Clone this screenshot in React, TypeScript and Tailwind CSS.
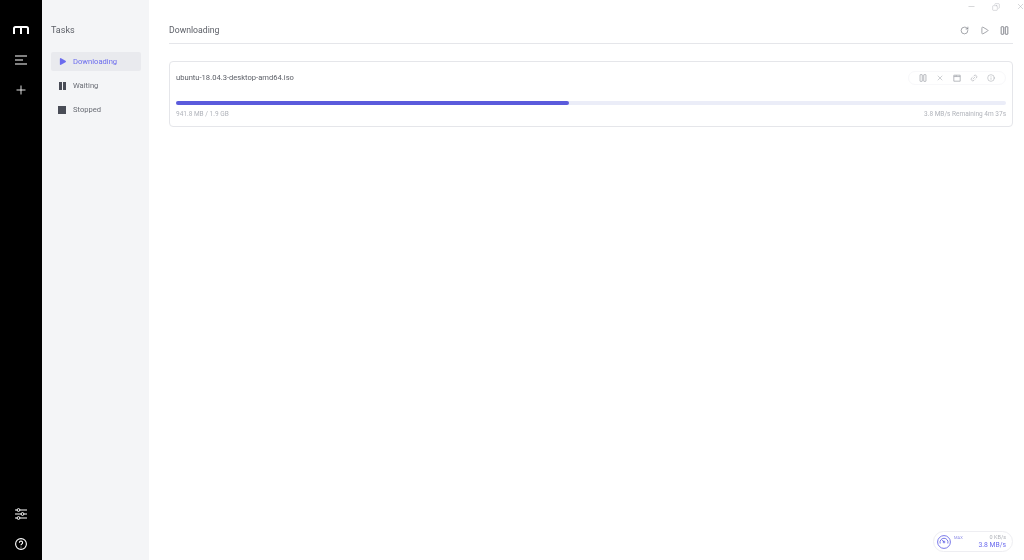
import { Link2, Info, Minus, Plus, RotateCw, X, Play, Copy } from 'lucide-react';

const PauseBars = ({ className }: { className?: string }) => (
  <svg viewBox="0 0 10 10" className={className} fill="none" stroke="currentColor" strokeWidth="0.9">
    <rect x="1.3" y="0.8" width="2.8" height="8.4" rx="0.5" />
    <rect x="5.9" y="0.8" width="2.8" height="8.4" rx="0.5" />
  </svg>
);

const FolderIcon = ({ className }: { className?: string }) => (
  <svg viewBox="0 0 10 10" className={className} fill="none" stroke="currentColor" strokeWidth="0.9">
    <path d="M1 1.5h8v7.5H1z" />
    <path d="M1 3.2h8M4 1.5v1.7" />
  </svg>
);

const Logo = () => (
  <svg viewBox="0 0 16 8" className="h-2 w-4" fill="none" stroke="#fff" strokeWidth="2">
    <path d="M1 8V2.5A1.5 1.5 0 0 1 2.5 1h11A1.5 1.5 0 0 1 15 2.5V8M8 1.5V8" />
  </svg>
);

const Sliders = () => (
  <svg viewBox="0 0 12 12" className="h-3 w-3" fill="none" stroke="#fff" strokeWidth="1">
    <path d="M0 2h2M5 2h7M0 6h6M9 6h3M0 10h2M5 10h7" />
    <circle cx="3.5" cy="2" r="1.4" />
    <circle cx="7.5" cy="6" r="1.4" />
    <circle cx="3.5" cy="10" r="1.4" />
  </svg>
);

const Help = () => (
  <svg viewBox="0 0 12 12" className="h-3 w-3" fill="none" stroke="#fff" strokeWidth="1.1">
    <circle cx="6" cy="6" r="5.4" />
    <path d="M4.4 4.7a1.6 1.6 0 1 1 2.4 1.4c-.5.3-.8.6-.8 1.2" />
    <circle cx="6" cy="9" r="0.5" fill="#fff" stroke="none" />
  </svg>
);

const SpeedGauge = () => (
  <svg viewBox="0 0 14 14" className="h-[14px] w-[14px] text-[#6a6ae6]" fill="none" stroke="currentColor" strokeWidth="0.9">
    <circle cx="7" cy="7" r="6.4" />
    <path d="M3.2 8.5a4 4 0 1 1 7.6 0" />
    <path d="M7 7 5 4.8" />
    <circle cx="7" cy="7" r="0.9" />
  </svg>
);

const menu = [
  { label: 'Waiting', icon: <span className="flex gap-[1px]"><span className="h-2 w-[3px] bg-[#4a4d57]" /><span className="h-2 w-[3px] bg-[#4a4d57]" /></span> },
  { label: 'Stopped', icon: <span className="h-2 w-2 bg-[#4a4d57]" /> },
];

export default function App() {
  return (
    <div className="relative flex h-[560px] w-[1024px] overflow-hidden bg-white font-['Roboto',sans-serif] font-light text-[#4d515a] blur-[0.3px]">
      <aside className="flex w-[42px] flex-col items-center justify-between bg-black pb-[10px] pt-[26px] text-white">
        <div className="flex flex-col items-center">
          <Logo />
          <svg viewBox="0 0 12 10" className="mt-[21px] h-[10px] w-3" stroke="#fff" strokeWidth="1.2">
            <path d="M0 1h12M0 5h8M0 9h12" />
          </svg>
          <Plus className="mt-[18px] h-[14px] w-[14px]" strokeWidth={1.5} />
        </div>
        <div className="flex flex-col items-center gap-[18px]">
          <Sliders />
          <Help />
        </div>
      </aside>

      <nav className="w-[107px] bg-[#f4f5f7] pl-[9px] pr-[8px] pt-[24px]">
        <h2 className="text-[9px] font-normal leading-[12px] text-[#5d6068]">Tasks</h2>
        <ul className="mt-[16px] flex flex-col gap-[5px] text-[7.6px] font-normal">
          <li className="flex h-[19px] items-center rounded-[2px] bg-[#e9eaee] text-[#6b6bee]">
            <span className="flex w-[22px] justify-center">
              <Play className="h-[9px] w-[9px]" fill="currentColor" strokeWidth={0} />
            </span>
            Downloading
          </li>
          {menu.map((item) => (
            <li key={item.label} className="flex h-[19px] items-center text-[#6a6d75]">
              <span className="flex w-[22px] justify-center">{item.icon}</span>
              {item.label}
            </li>
          ))}
        </ul>
      </nav>

      <main className="flex-1 pl-5 pr-[11px] pt-[16px]">
        <header className="flex h-[28px] items-start justify-between border-b border-[#e5e6ea] pt-[8px]">
          <h1 className="text-[8.7px] font-normal leading-[12px] text-[#5d6068]">Downloading</h1>
          <div className="mr-[4px] flex items-center gap-[11px] pt-[2px] text-[#6a6d75]">
            <RotateCw className="h-[9px] w-[9px]" strokeWidth={1.6} />
            <Play className="h-[9px] w-[9px]" strokeWidth={1.6} />
            <PauseBars className="h-[9px] w-[9px]" />
          </div>
        </header>

        <section className="mt-[17px] h-[66px] rounded-[4px] border border-[#e5e6ea] px-[6px] pt-[10px]">
          <div className="flex h-[12px] items-center justify-between">
            <span className="text-[7.6px] font-normal text-[#5d6068]">ubuntu-18.04.3-desktop-amd64.iso</span>
            <div className="flex h-[14px] items-center gap-[9px] rounded-full border border-[#f8f8fa] pl-[10px] pr-[10px] text-[#9fa2a9]">
              <PauseBars className="h-2 w-2" />
              <X className="h-2 w-2" strokeWidth={1.5} />
              <FolderIcon className="h-2 w-2" />
              <Link2 className="h-2 w-2 -rotate-45" strokeWidth={1.5} />
              <Info className="h-2 w-2" strokeWidth={1.5} />
            </div>
          </div>
          <div className="mt-[17px] h-1 rounded-full bg-[#ebedf8]">
            <div className="h-1 rounded-full bg-[#5b5bdc]" style={{ width: '47.4%' }} />
          </div>
          <div className="mt-1 flex justify-between text-[6.5px] font-normal leading-[10px] text-[#b0b3ba]">
            <span>941.8 MB / 1.9 GB</span>
            <span>3.8 MB/s Remaining 4m 37s</span>
          </div>
        </section>
      </main>

      <div className="absolute right-[-1px] top-[2px] flex items-center gap-[16px] text-[#a5a7ad]">
        <Minus className="h-[9px] w-[9px]" strokeWidth={1.2} />
        <Copy className="h-2 w-2 -scale-x-100" strokeWidth={1.2} />
        <X className="h-[9px] w-[9px]" strokeWidth={1.2} />
      </div>

      <div className="absolute bottom-2 right-[11px] flex h-[21px] w-[80px] items-center justify-between rounded-full border border-[#eeeef2] bg-white pl-[3px] pr-[6px]">
        <SpeedGauge />
        <span className="mb-[9px] flex-1 pl-[3px] text-[4px] font-normal leading-[5px] text-[#8a8ae6]">MAX</span>
        <div className="flex flex-col items-end font-normal">
          <span className="text-[5.5px] leading-[7px] text-[#b0b3ba]">0 KB/s</span>
          <span className="text-[6.8px] leading-[9px] text-[#6b6bee]">3.8 MB/s</span>
        </div>
      </div>
    </div>
  );
}
